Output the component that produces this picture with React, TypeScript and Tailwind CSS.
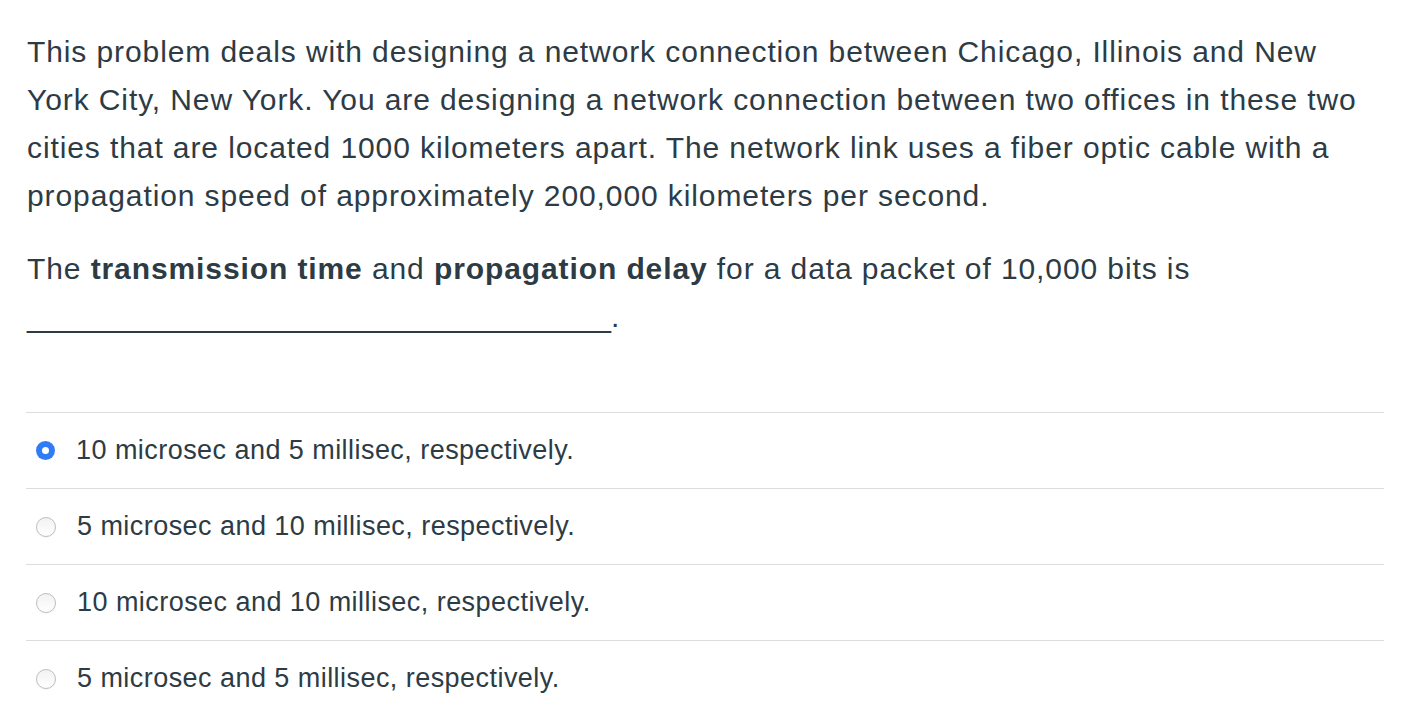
const options = [
  { label: '10 microsec and 5 millisec, respectively.', checked: true },
  { label: '5 microsec and 10 millisec, respectively.', checked: false },
  { label: '10 microsec and 10 millisec, respectively.', checked: false },
  { label: '5 microsec and 5 millisec, respectively.', checked: false },
];

function Radio({ checked }: { checked: boolean }) {
  if (checked) {
    return (
      <span className="flex h-[19px] w-[19px] shrink-0 items-center justify-center rounded-full bg-[#2f7cf6]">
        <span className="h-[7px] w-[7px] rounded-full bg-white" />
      </span>
    );
  }
  return (
    <span className="h-[20px] w-[20px] shrink-0 rounded-full border border-[#bdbdbd] bg-gradient-to-b from-[#f2f2f2] to-white shadow-[0_1px_0_rgba(0,0,0,0.04)]" />
  );
}

export default function App() {
  return (
    <div
      className="min-h-screen bg-white pt-[28px] pl-[27px] pr-[18px] text-[#2d3b45]"
      style={{ fontFamily: '"Liberation Sans", Arial, Helvetica, sans-serif' }}
    >
      <div className="text-[30px] leading-[48px] tracking-[0.9px]">
        <p>
          This problem deals with designing a network connection between Chicago, Illinois and New
          York City, New York. You are designing a network connection between two offices in these two
          cities that are located 1000 kilometers apart. The network link uses a fiber optic cable with a
          propagation speed of approximately 200,000 kilometers per second.
        </p>
        <p className="mt-[25px]">
          The <strong className="font-bold">transmission time</strong> and{' '}
          <strong className="font-bold">propagation delay</strong> for a data packet of 10,000 bits is
          <br />
          <span className="tracking-normal">___________________________________</span>.
        </p>
      </div>

      <ul className="mt-[71px] -ml-px">
        {options.map((o) => (
          <li
            key={o.label}
            className="flex h-[76px] items-center gap-[21px] border-t border-[#dddddd] pl-[10px] text-[27px] tracking-[0.45px]"
          >
            <Radio checked={o.checked} />
            <span>{o.label}</span>
          </li>
        ))}
      </ul>
    </div>
  );
}
